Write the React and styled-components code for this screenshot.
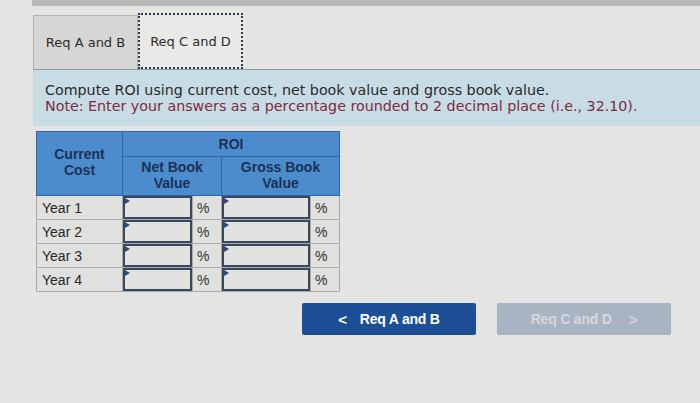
import styled, { createGlobalStyle } from 'styled-components';

const GlobalStyle = createGlobalStyle`
  html, body {
    margin: 0;
    padding: 0;
    background: #e4e4e2;
    width: 700px;
    height: 403px;
    overflow: hidden;
  }
`;

const years = ['Year 1', 'Year 2', 'Year 3', 'Year 4'];

export default function App() {
  return (
    <Page>
      <GlobalStyle />
      <TopStrip />
      <TabBar>
        <Tab>Req A and B</Tab>
        <Tab active>Req C and D</Tab>
      </TabBar>
      <Instructions>
        <p>Compute ROI using current cost, net book value and gross book value.</p>
        <Note>Note: Enter your answers as a percentage rounded to 2 decimal place (i.e., 32.10).</Note>
      </Instructions>
      <Table>
        <colgroup>
          <col style={{ width: 86 }} />
          <col style={{ width: 70 }} />
          <col style={{ width: 29 }} />
          <col style={{ width: 89 }} />
          <col style={{ width: 29 }} />
        </colgroup>
        <thead>
          <tr>
            <HeadCell rowSpan={2} tall>
              Current
              <br />
              Cost
            </HeadCell>
            <HeadCell colSpan={4} short>
              ROI
            </HeadCell>
          </tr>
          <tr>
            <HeadCell colSpan={2} sub>
              Net Book
              <br />
              Value
            </HeadCell>
            <HeadCell colSpan={2} sub>
              Gross Book
              <br />
              Value
            </HeadCell>
          </tr>
        </thead>
        <tbody>
          {years.map((y) => (
            <tr key={y}>
              <LabelCell>{y}</LabelCell>
              <InputCell>
                <InputBox>
                  <input type="text" />
                </InputBox>
              </InputCell>
              <UnitCell>%</UnitCell>
              <InputCell>
                <InputBox>
                  <input type="text" />
                </InputBox>
              </InputCell>
              <UnitCell>%</UnitCell>
            </tr>
          ))}
        </tbody>
      </Table>
      <NavRow>
        <NavButton>
          <Chevron>&lt;</Chevron>
          Req A and B
        </NavButton>
        <NavButton disabled>
          Req C and D
          <Chevron>&gt;</Chevron>
        </NavButton>
      </NavRow>
    </Page>
  );
}

const Page = styled.div`
  width: 700px;
  height: 403px;
  background: #e4e4e2;
`;

const TopStrip = styled.div`
  height: 6px;
  margin-left: 32px;
  background: #b9b9b7;
`;

const TabBar = styled.div`
  display: flex;
  align-items: flex-end;
  margin-top: 8px;
  margin-left: 33px;
  height: 55px;
`;

const Tab = styled.div`
  box-sizing: border-box;
  display: flex;
  align-items: center;
  justify-content: center;
  width: 105px;
  height: ${(p) => (p.active ? '56px' : '54px')};
  font-family: 'DejaVu Sans', Verdana, sans-serif;
  font-size: 13px;
  color: #2b2b2b;
  background: ${(p) => (p.active ? '#e9e9e7' : '#d6d6d4')};
  border: ${(p) => (p.active ? '2px dotted #2c3550' : '1px solid #b2b2b0')};
  border-bottom: ${(p) => (p.active ? '2px dotted #2c3550' : 'none')};
`;

const Instructions = styled.div`
  margin-left: 33px;
  height: 57px;
  box-sizing: border-box;
  padding: 12px 0 0 12px;
  background: #c8dce6;
  border-top: 1px solid #8d9ba4;
  font-family: 'DejaVu Sans', Verdana, sans-serif;
  font-size: 14.25px;
  line-height: 16px;
  color: #2a2a2a;

  p {
    margin: 0;
  }
`;

const Note = styled.p`
  color: #7e2b3d;
`;

const Table = styled.table`
  margin: 5px 0 0 36px;
  border-collapse: collapse;
  table-layout: fixed;
  width: 303px;
  font-family: 'Liberation Sans', Arial, sans-serif;
  font-size: 14px;
`;

const HeadCell = styled.th`
  background: #4c8ccd;
  color: #1b3158;
  font-weight: bold;
  font-size: 14px;
  line-height: 16px;
  text-align: center;
  border: 1px solid #2f67a6;
  padding: 0;
  height: ${(p) => (p.short ? '24px' : p.sub ? '36px' : 'auto')};
  vertical-align: ${(p) => (p.tall || p.sub ? 'top' : 'middle')};
  padding-top: ${(p) => (p.tall ? '14px' : p.sub ? '2px' : '0')};
`;

const LabelCell = styled.td`
  height: 23px;
  padding: 0 0 0 5px;
  background: #e0e0de;
  border: 1px solid #ababab;
  color: #262626;
  font-size: 14px;
`;

const InputCell = styled.td`
  padding: 0;
  background: #e0e0de;
  border: 1px solid #ababab;
  height: 23px;
`;

const InputBox = styled.div`
  position: relative;
  height: 23px;

  input {
    box-sizing: border-box;
    display: block;
    width: 100%;
    height: 100%;
    margin: 0;
    border: 2px solid #37475c;
    background: #e2e2e0;
    outline: none;
  }

  &::before {
    content: '';
    position: absolute;
    left: 2px;
    top: 2px;
    border-top: 3px solid transparent;
    border-bottom: 3px solid transparent;
    border-left: 5px solid #2c4a7a;
  }
`;

const UnitCell = styled.td`
  padding: 0 0 0 4px;
  background: #e0e0de;
  border: 1px solid #ababab;
  color: #333;
  font-size: 14px;
`;

const NavRow = styled.div`
  display: flex;
  gap: 21px;
  margin: 11px 0 0 302px;
`;

const NavButton = styled.button`
  box-sizing: border-box;
  width: 174px;
  height: 32px;
  display: flex;
  align-items: center;
  justify-content: center;
  gap: ${(p) => (p.disabled ? '17px' : '13px')};
  border: none;
  border-radius: 2px;
  padding: 0;
  font-family: 'Liberation Sans', Arial, sans-serif;
  font-size: 14px;
  font-weight: bold;
  letter-spacing: -0.2px;
  background: ${(p) => (p.disabled ? '#a9b4c2' : '#1c4f95')};
  color: ${(p) => (p.disabled ? '#d3d9e0' : '#ffffff')};
`;

const Chevron = styled.span`
  font-size: 15px;
  font-weight: bold;
`;
